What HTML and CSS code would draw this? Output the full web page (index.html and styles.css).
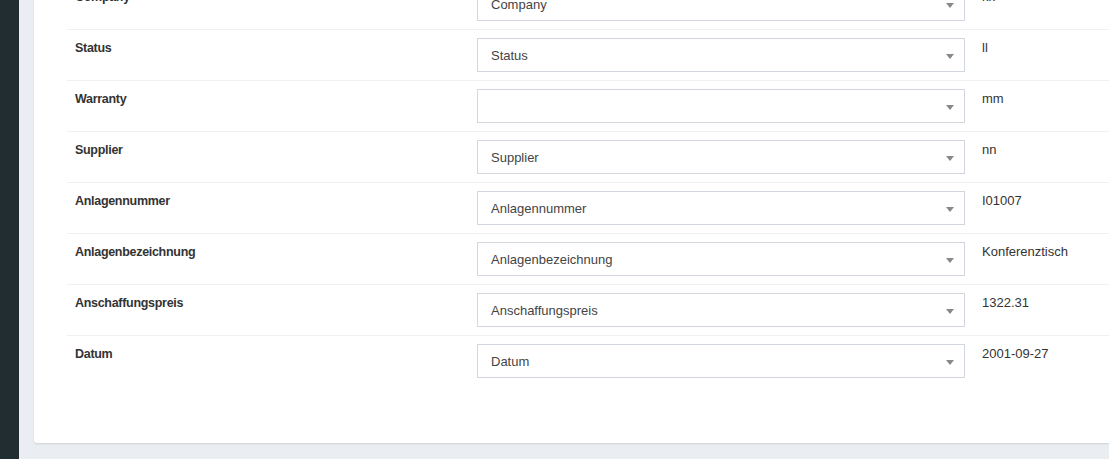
FILE: index.html
```html
<!DOCTYPE html>
<html lang="en">
<head>
    <meta charset="UTF-8">
    <meta name="viewport" content="width=device-width, initial-scale=1.0">
    <title>Asset Import</title>
    <link rel="stylesheet" href="styles.css">
</head>
<body>
    <div class="layout">
        <!-- Sidebar -->
        <div class="sidebar"></div>

        <div class="content">
            <div class="card">
                <div class="field-row">
                    <div class="field-label">Company</div>
                    <div class="field-select"><span>Company</span><i class="caret"></i></div>
                    <div class="field-value">kk</div>
                </div>
                <div class="field-row">
                    <div class="field-label">Status</div>
                    <div class="field-select"><span>Status</span><i class="caret"></i></div>
                    <div class="field-value">ll</div>
                </div>
                <div class="field-row">
                    <div class="field-label">Warranty</div>
                    <div class="field-select"><span></span><i class="caret"></i></div>
                    <div class="field-value">mm</div>
                </div>
                <div class="field-row">
                    <div class="field-label">Supplier</div>
                    <div class="field-select"><span>Supplier</span><i class="caret"></i></div>
                    <div class="field-value">nn</div>
                </div>
                <div class="field-row">
                    <div class="field-label">Anlagennummer</div>
                    <div class="field-select"><span>Anlagennummer</span><i class="caret"></i></div>
                    <div class="field-value">I01007</div>
                </div>
                <div class="field-row">
                    <div class="field-label">Anlagenbezeichnung</div>
                    <div class="field-select"><span>Anlagenbezeichnung</span><i class="caret"></i></div>
                    <div class="field-value">Konferenztisch</div>
                </div>
                <div class="field-row">
                    <div class="field-label">Anschaffungspreis</div>
                    <div class="field-select"><span>Anschaffungspreis</span><i class="caret"></i></div>
                    <div class="field-value">1322.31</div>
                </div>
                <div class="field-row">
                    <div class="field-label">Datum</div>
                    <div class="field-select"><span>Datum</span><i class="caret"></i></div>
                    <div class="field-value">2001-09-27</div>
                </div>
            </div>
        </div>
    </div>
</body>
</html>
```

FILE: styles.css
```css
body {
    margin: 0;
    padding: 0;
    background-color: #eaedf2;
    font-family: "Liberation Sans", Arial, sans-serif;
    font-size: 13px;
    color: #333;
    overflow: hidden;
}

.layout {
    display: flex;
    min-height: 100vh;
}

.sidebar {
    width: 19px;
    flex-shrink: 0;
    background-color: #222d32;
}

.content {
    flex: 1;
    padding: 0 0 16px 15px;
    overflow: hidden;
}

.card {
    margin-top: -22px;
    margin-right: -10px;
    padding: 0 0 57px 33px;
    background-color: #fff;
    border-radius: 0 0 3px 3px;
    box-shadow: 0 1px 2px rgba(0, 0, 0, 0.12);
}

.field-row {
    display: grid;
    grid-template-columns: 402px 488px 1fr;
    padding: 8px 0 8px 8px;
    border-top: 1px solid #eef0f3;
}

.field-label {
    font-weight: bold;
    font-size: 12.5px;
    letter-spacing: -0.3px;
    line-height: 20px;
    color: #333;
}

.field-select {
    display: flex;
    align-items: center;
    justify-content: space-between;
    height: 34px;
    box-sizing: border-box;
    padding: 0 10px 0 13px;
    border: 1px solid #d2d6de;
    color: #444;
}

.caret {
    width: 0;
    height: 0;
    border-left: 4px solid transparent;
    border-right: 4px solid transparent;
    border-top: 5px solid #888;
    margin-top: 2px;
}

.field-value {
    padding-left: 17px;
    line-height: 20px;
    color: #333;
}
```
